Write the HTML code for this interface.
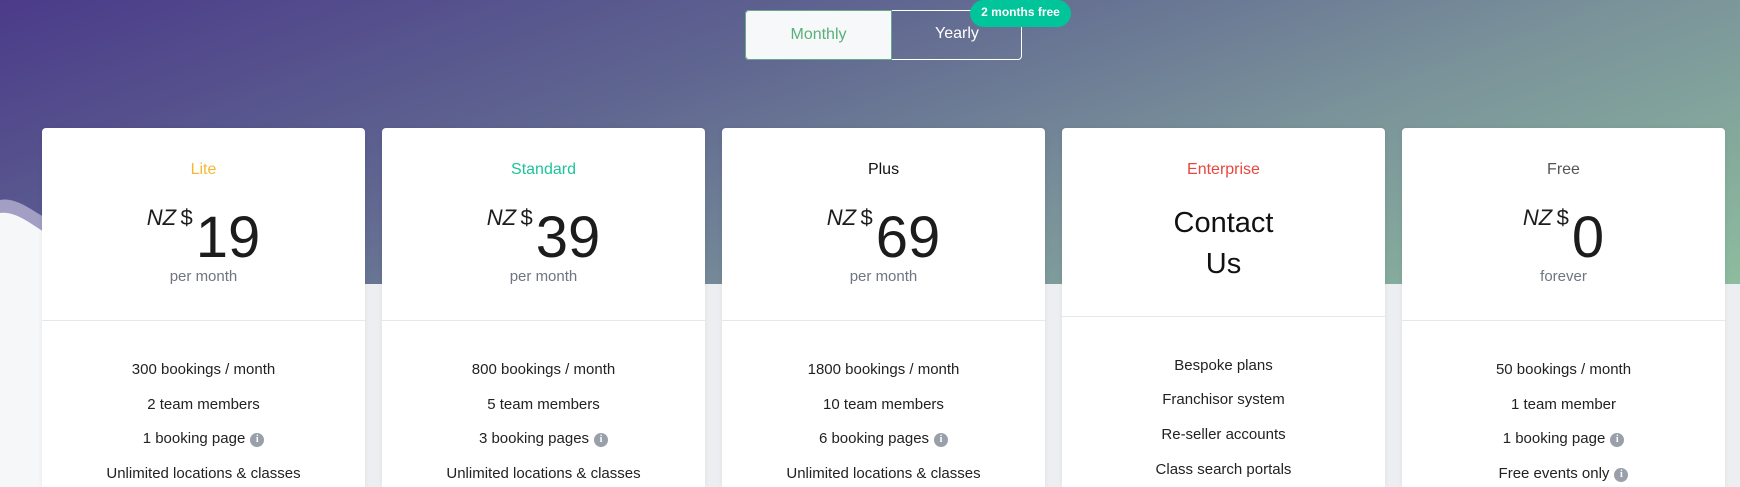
<!DOCTYPE html>
<html><head><meta charset="utf-8"><style>
*{box-sizing:border-box;margin:0;padding:0}
html{overflow:hidden;height:487px}
body{width:1740px;height:487px;overflow:hidden;position:relative;background:#eceef1;font-family:"Liberation Sans",sans-serif}
.bg{position:absolute;left:0;top:0;width:1740px;height:284px;background:linear-gradient(160deg,#4b3b8a 0%,#5f6590 35%,#7a929a 65%,#8dbc9e 100%)}
.card{position:absolute;top:128px;width:323px;height:359px;background:#fff;border-radius:4px 4px 0 0;box-shadow:0 0 6px rgba(0,0,0,.06);text-align:center}
.t{position:absolute;top:33px;width:100%;font-size:16px}
.price{position:absolute;top:79px;width:100%;color:#1c1c1c}
.nz{font-size:22px;font-style:italic;vertical-align:top;position:relative;top:-2px}
.dl{font-size:22px;vertical-align:top;position:relative;top:-2px}
.big{font-size:58px;line-height:62px;margin-left:3px}
.per{position:absolute;top:140px;width:100%;color:#6f7480;font-size:15px}
.div{position:absolute;top:192px;left:0;width:100%;border-top:1px solid #e5e7ee}
.f{position:absolute;width:100%;font-size:15px;color:#222}
.i{display:inline-block;width:14px;height:14px;border-radius:7px;background:#9aa0aa;color:#fff;font-size:10px;font-weight:bold;line-height:14px;vertical-align:1px;margin-left:5px;font-family:"Liberation Serif",serif}
</style></head><body>
<div class="bg"></div>
<svg style="position:absolute;left:0;top:195px" width="44" height="292"><path d="M0 5 C15 2 30 14 44 22 L44 292 L0 292Z" fill="#a29ec4"/><path d="M0 18 C15 16 30 28 44 37 L44 292 L0 292Z" fill="#f6f7f9"/></svg>
<div style="position:absolute;left:745px;top:10px;width:277px;height:50px;border:1px solid #fff;border-radius:4px"></div>
<div style="position:absolute;left:745px;top:10px;width:147px;height:50px;background:#f6f8fa;border:1px solid #6aa88a;border-radius:4px 0 0 4px;color:#5ab07a;font-size:16px;line-height:48px;text-align:center">Monthly</div>
<div style="position:absolute;left:892px;top:10px;width:130px;height:50px;color:#fff;font-size:16px;line-height:48px;text-align:center">Yearly</div>
<div style="position:absolute;left:970px;top:0;width:101px;height:27px;background:#00c49a;border-radius:14px;color:#fff;font-size:12px;font-weight:bold;line-height:24px;text-align:center">2 months free</div>

<div class="card" style="left:42px"><div class="t" style="color:#f7b731">Lite</div>
<div class="price"><span class="nz">NZ</span> <span class="dl">$</span><span class="big">19</span></div>
<div class="per">per month</div><div class="div"></div>
<div class="f" style="top:233px">300 bookings / month</div><div class="f" style="top:268px">2 team members</div><div class="f" style="top:302px">1 booking page<span class="i">i</span></div><div class="f" style="top:337px">Unlimited locations &amp; classes</div></div>

<div class="card" style="left:382px"><div class="t" style="color:#1ec39a">Standard</div>
<div class="price"><span class="nz">NZ</span> <span class="dl">$</span><span class="big">39</span></div>
<div class="per">per month</div><div class="div"></div>
<div class="f" style="top:233px">800 bookings / month</div><div class="f" style="top:268px">5 team members</div><div class="f" style="top:302px">3 booking pages<span class="i">i</span></div><div class="f" style="top:337px">Unlimited locations &amp; classes</div></div>

<div class="card" style="left:722px"><div class="t" style="color:#111">Plus</div>
<div class="price"><span class="nz">NZ</span> <span class="dl">$</span><span class="big">69</span></div>
<div class="per">per month</div><div class="div"></div>
<div class="f" style="top:233px">1800 bookings / month</div><div class="f" style="top:268px">10 team members</div><div class="f" style="top:302px">6 booking pages<span class="i">i</span></div><div class="f" style="top:337px">Unlimited locations &amp; classes</div></div>

<div class="card" style="left:1062px"><div class="t" style="color:#e8473f">Enterprise</div>
<div style="position:absolute;top:75px;width:100%;font-size:29px;line-height:41px;color:#111">Contact<br>Us</div>
<div class="div" style="top:188px"></div>
<div class="f" style="top:229px">Bespoke plans</div><div class="f" style="top:263px">Franchisor system</div><div class="f" style="top:298px">Re-seller accounts</div><div class="f" style="top:333px">Class search portals</div></div>

<div class="card" style="left:1402px"><div class="t" style="color:#555">Free</div>
<div class="price"><span class="nz">NZ</span> <span class="dl">$</span><span class="big">0</span></div>
<div class="per">forever</div><div class="div"></div>
<div class="f" style="top:233px">50 bookings / month</div><div class="f" style="top:268px">1 team member</div><div class="f" style="top:302px">1 booking page<span class="i">i</span></div><div class="f" style="top:337px">Free events only<span class="i">i</span></div></div>
</body></html>
